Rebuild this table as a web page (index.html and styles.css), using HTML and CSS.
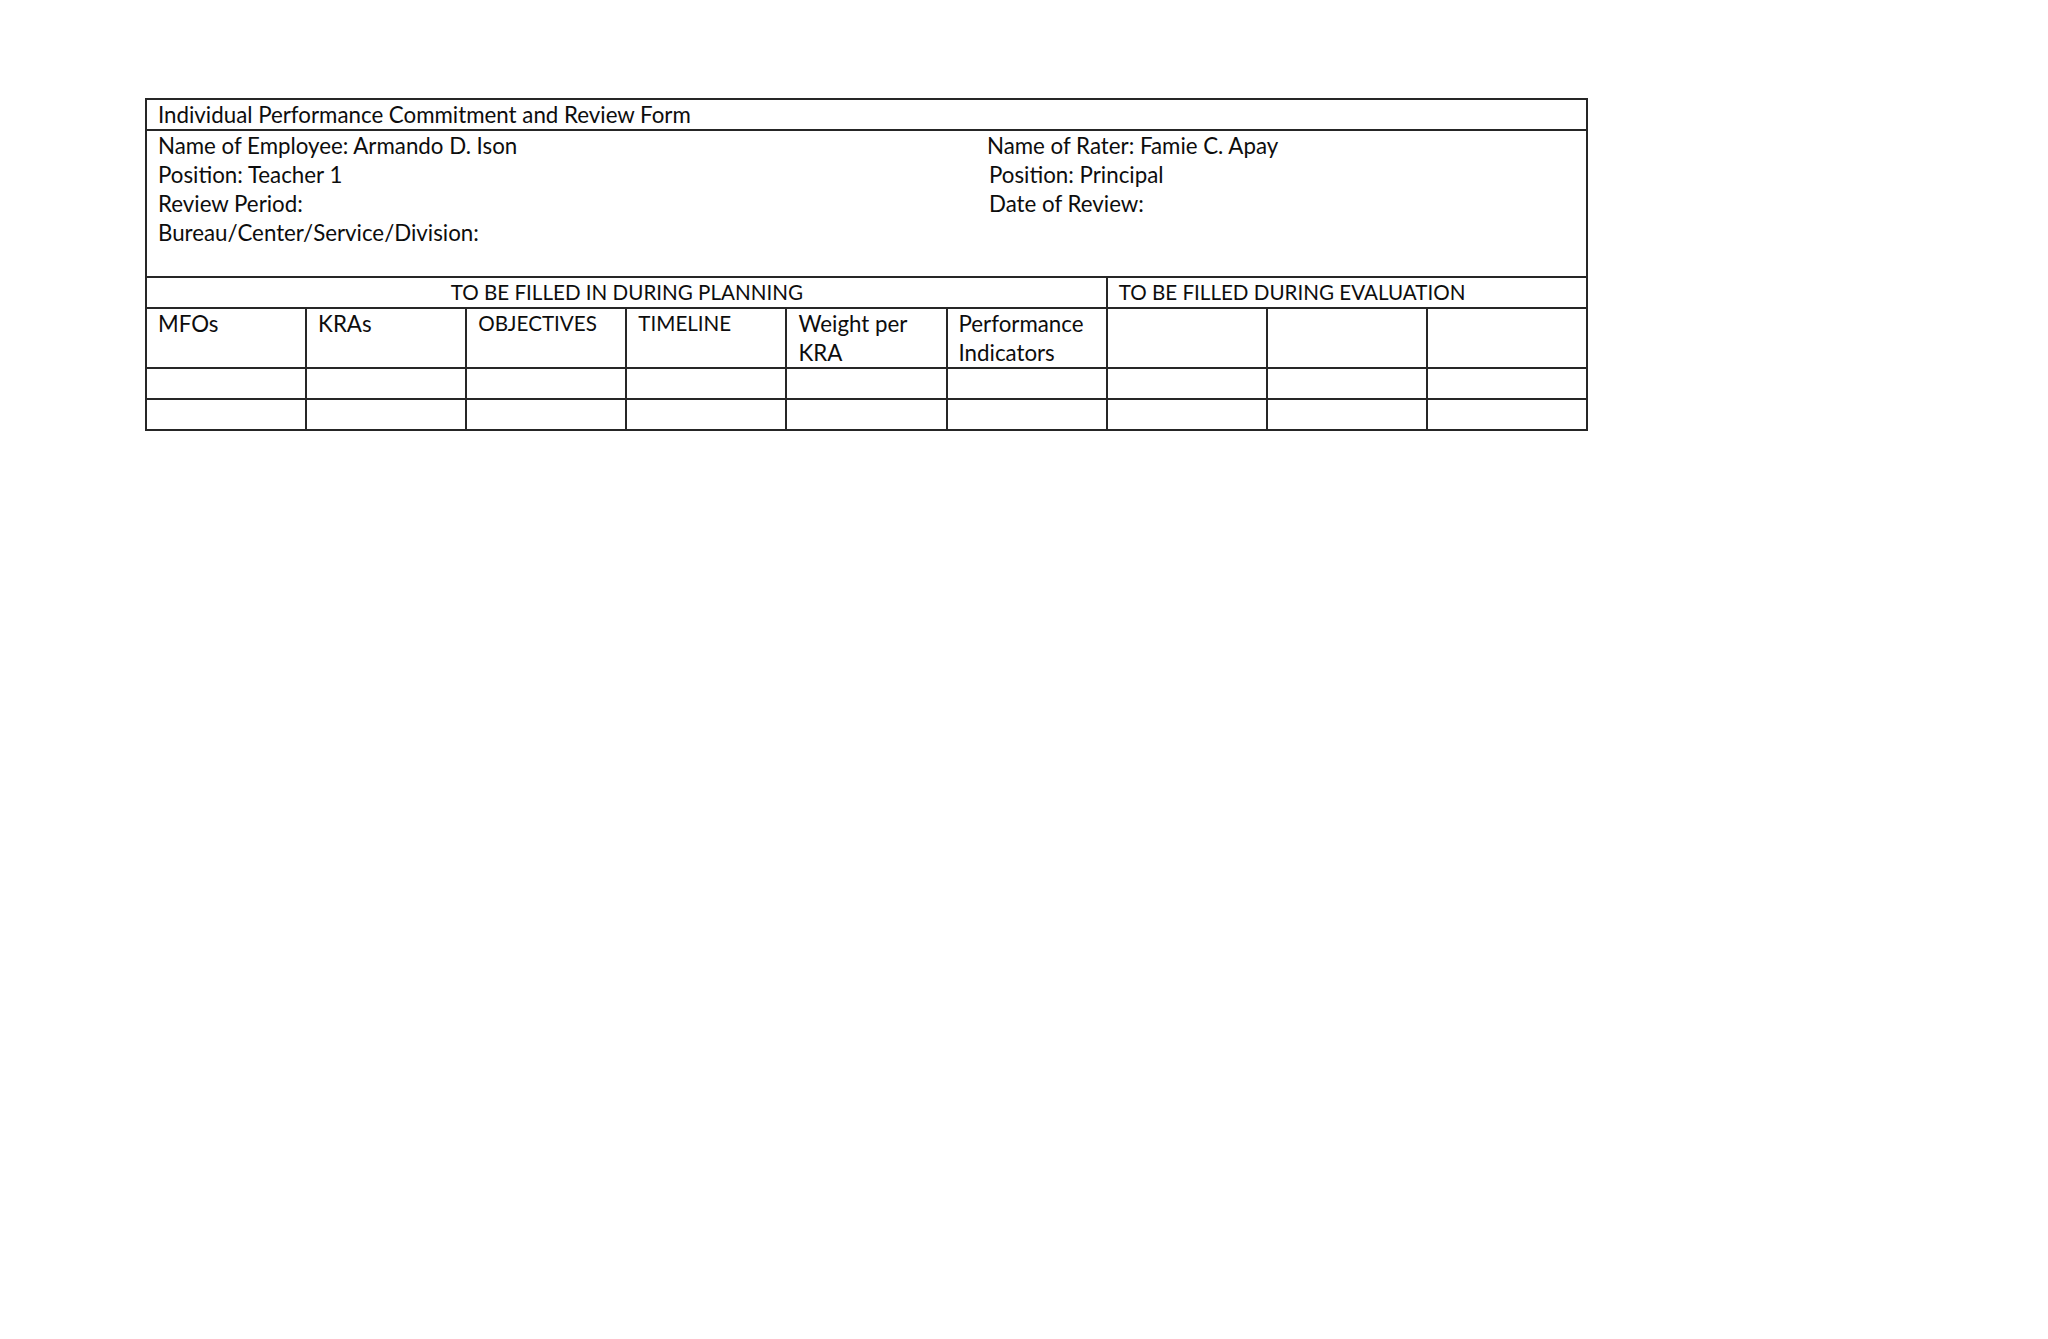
FILE: index.html
```html
<!DOCTYPE html>
<html lang="en">
<head>
<meta charset="utf-8">
<title>Individual Performance Commitment and Review Form</title>
<link rel="stylesheet" href="styles.css">
</head>
<body>
<div class="page">
  <table class="ipcr">
    <colgroup>
      <col><col><col><col><col><col><col><col><col>
    </colgroup>
    <tr class="row-title">
      <td colspan="9">Individual Performance Commitment and Review Form</td>
    </tr>
    <tr class="row-info">
      <td colspan="9">
        <div class="info">
          <div class="info-col">
            <div class="line">Name of Employee: Armando D. Ison</div>
            <div class="line">Position: Teacher 1</div>
            <div class="line">Review Period:</div>
            <div class="line">Bureau/Center/Service/Division:</div>
            <div class="line">&nbsp;</div>
          </div>
          <div class="info-col">
            <div class="line">Name of Rater: Famie C. Apay</div>
            <div class="line shift">Position: Principal</div>
            <div class="line shift">Date of Review:</div>
          </div>
        </div>
      </td>
    </tr>
    <tr class="row-section">
      <td colspan="6" class="center caps">TO BE FILLED IN DURING PLANNING</td>
      <td colspan="3" class="caps">TO BE FILLED DURING EVALUATION</td>
    </tr>
    <tr class="row-head">
      <td>MFOs</td>
      <td>KRAs</td>
      <td class="caps">OBJECTIVES</td>
      <td class="caps">TIMELINE</td>
      <td>Weight per KRA</td>
      <td>Performance Indicators</td>
      <td></td>
      <td></td>
      <td></td>
    </tr>
    <tr class="row-empty">
      <td></td><td></td><td></td><td></td><td></td><td></td><td></td><td></td><td></td>
    </tr>
    <tr class="row-empty">
      <td></td><td></td><td></td><td></td><td></td><td></td><td></td><td></td><td></td>
    </tr>
  </table>
</div>
</body>
</html>
```

FILE: styles.css
```css
html, body {
  margin: 0;
  padding: 0;
  background: #ffffff;
}

.page {
  padding: 98px 0 0 145px;
}

.ipcr {
  border-collapse: collapse;
  table-layout: fixed;
  width: 1443px;
  font-family: "Lato", "Open Sans", "Liberation Sans", sans-serif;
  font-size: 22.3px;
  line-height: 29px;
  color: #0d0d0d;
}

.ipcr td {
  border: 2px solid #262626;
  padding: 0 10px 0 11px;
  vertical-align: top;
  text-align: left;
}

.ipcr td.caps {
  font-size: 20.6px;
}

.info {
  display: grid;
  grid-template-columns: 829px 1fr;
}

.line {
  height: 29px;
  white-space: nowrap;
}

.shift {
  padding-left: 2px;
}

.row-section td.center {
  text-align: center;
}

.row-empty td {
  height: 29px;
}
```
